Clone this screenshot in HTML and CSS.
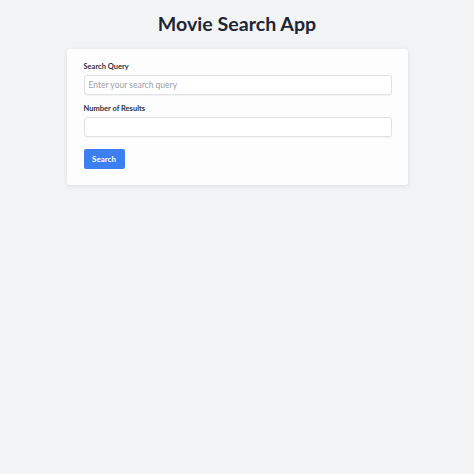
FILE: index.html
```html
<!DOCTYPE html>
<html>
<head>
<meta charset="utf-8">
<link rel="stylesheet" href="styles.css">
</head>
<body>
<div class="page">
  <h1 class="title">Movie Search App</h1>
  <form class="card">
    <div class="field">
      <label class="label">Search Query</label>
      <input class="input" type="text" placeholder="Enter your search query" autofocus>
    </div>
    <div class="field">
      <label class="label">Number of Results</label>
      <input class="input" type="text">
    </div>
    <button class="btn" type="button">Search</button>
  </form>
</div>
</body>
</html>
```
FILE: styles.css
```css
html, body {
  margin: 0;
  padding: 0;
  background: #f2f3f5;
  font-family: "Lato", "Open Sans", sans-serif;
  color: #1f2937;
}
.page {
  width: 474px;
  height: 474px;
  box-sizing: border-box;
  padding-top: 10px;
  display: flex;
  flex-direction: column;
  align-items: center;
}
.title {
  margin: 0;
  font-size: 19.6px;
  line-height: 28px;
  font-weight: 700;
  color: #1f2633;
}
.card {
  margin-top: 11px;
  width: 341px;
  box-sizing: border-box;
  background: #fdfdfe;
  border-radius: 3px;
  box-shadow: 0 1px 4px rgba(0,0,0,0.1);
  padding: 13px 16px 16px 17px;
  display: flex;
  flex-direction: column;
}
.field {
  display: flex;
  flex-direction: column;
  margin-bottom: 9px;
}
.label {
  font-size: 7.5px;
  font-weight: 700;
  line-height: 9px;
  color: #2b3240;
  margin-bottom: 4px;
}
.input {
  height: 20px;
  box-sizing: border-box;
  border: 1px solid #dfe2e6;
  border-radius: 3px;
  background: #fff;
  padding: 0 4px;
  font-family: inherit;
  font-size: 8.5px;
  color: #374151;
  caret-color: #555;
  box-shadow: 0 1px 1px rgba(0,0,0,0.04);
  outline: none;
}
.input::placeholder {
  color: #9aa0a8;
}
.btn {
  align-self: flex-start;
  width: 41px;
  height: 20px;
  margin-top: 3px;
  border: none;
  border-radius: 2px;
  background: #3d7ef0;
  color: #fff;
  font-family: inherit;
  font-size: 8px;
  font-weight: 700;
  padding: 0;
}
```
